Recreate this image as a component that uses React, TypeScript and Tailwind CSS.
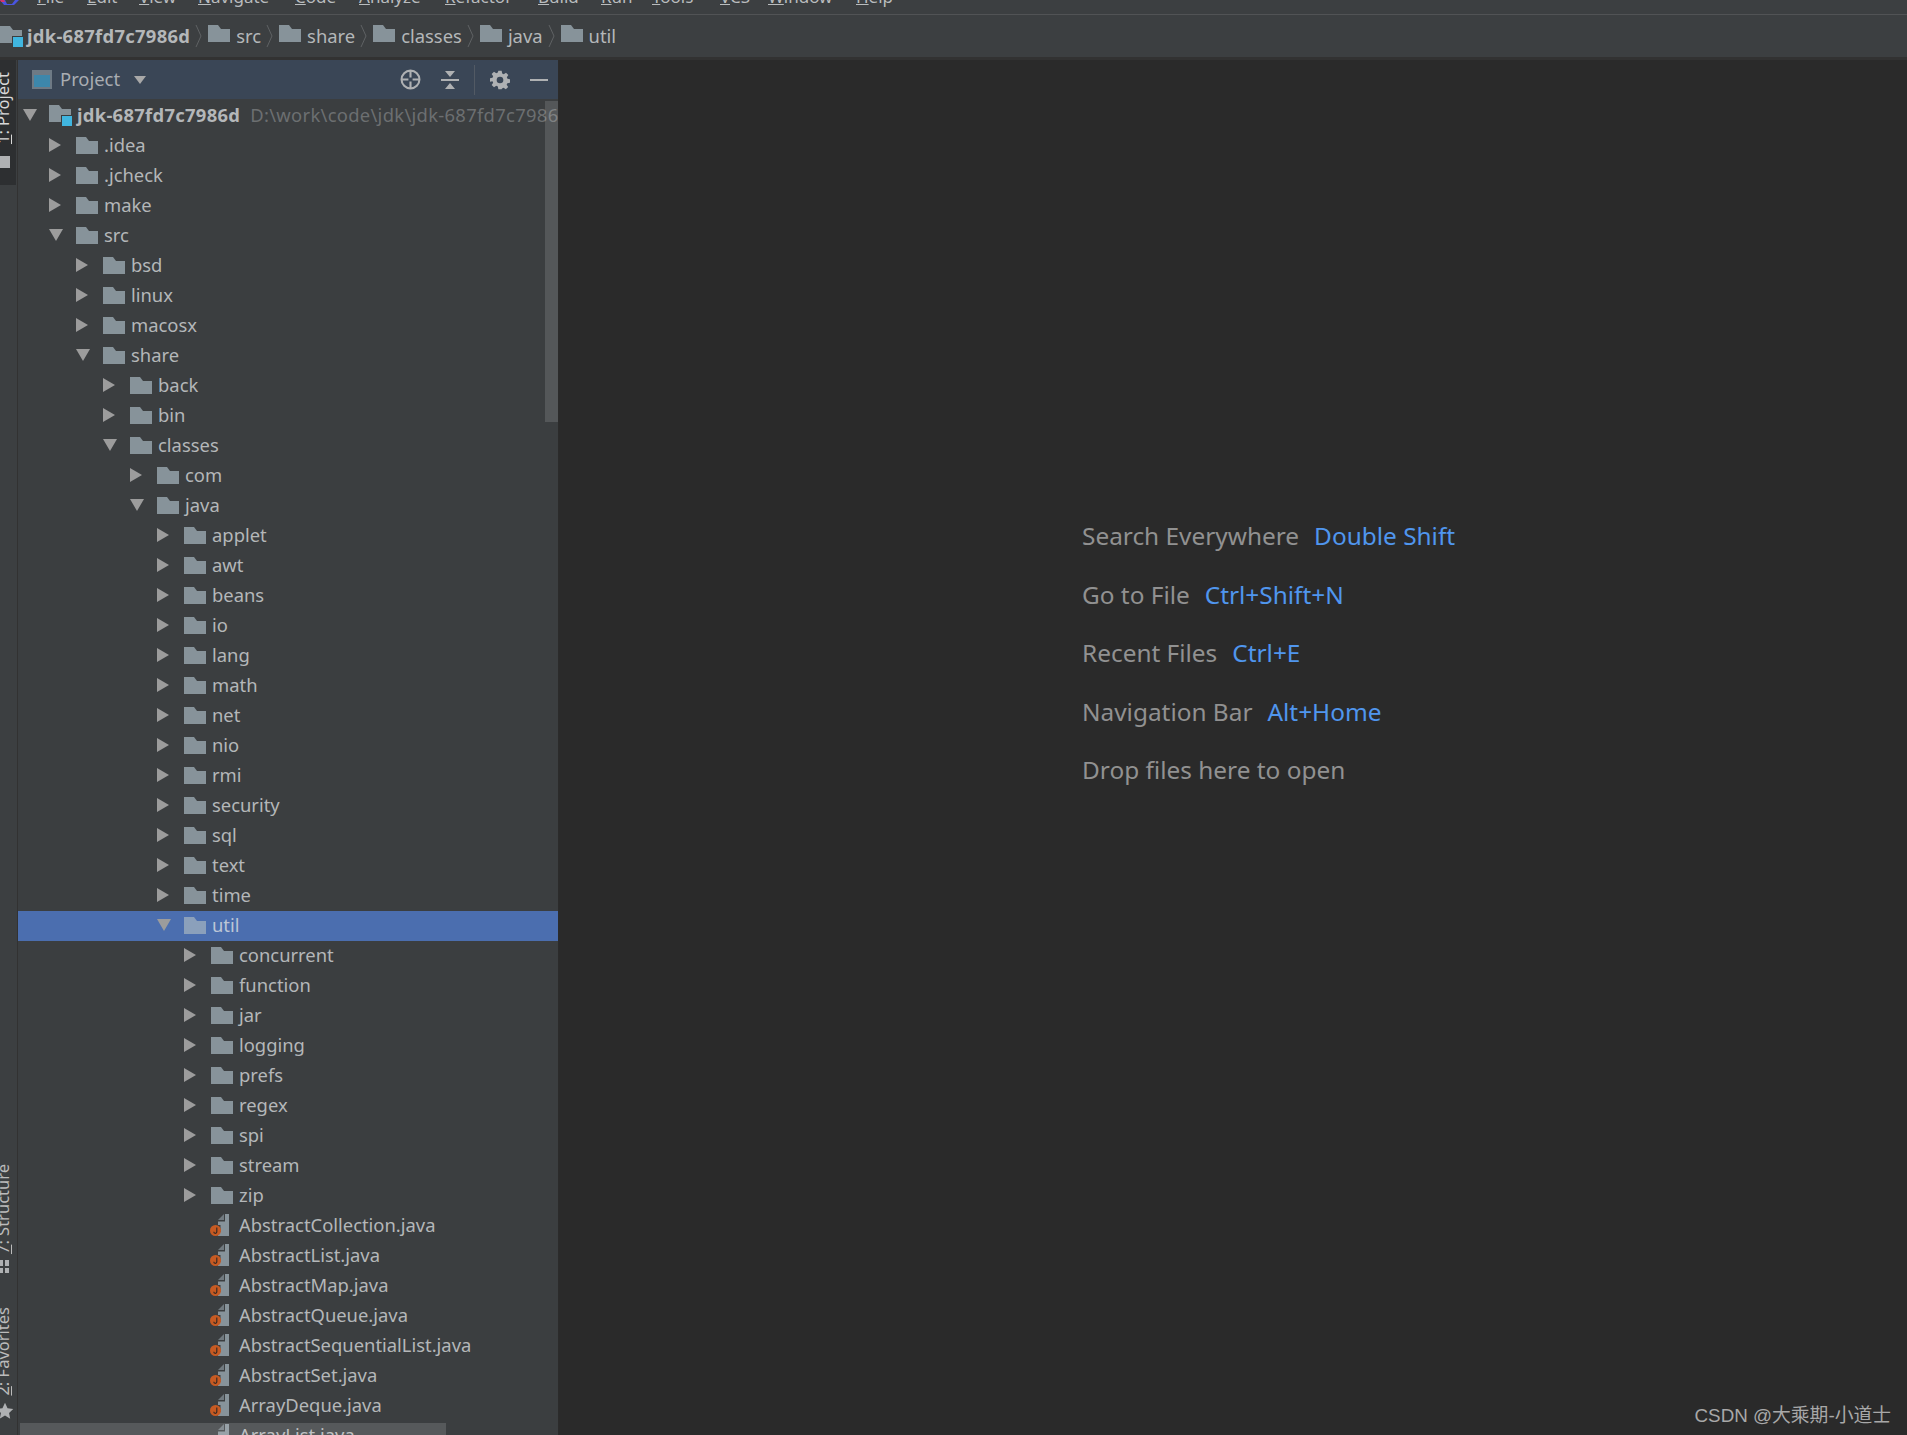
const menuItems = [
  { label: 'File', w: 50 },
  { label: 'Edit', w: 52 },
  { label: 'View', w: 59 },
  { label: 'Navigate', w: 97 },
  { label: 'Code', w: 64 },
  { label: 'Analyze', w: 86 },
  { label: 'Refactor', w: 93 },
  { label: 'Build', w: 63 },
  { label: 'Run', w: 51 },
  { label: 'Tools', w: 68 },
  { label: 'VCS', w: 48 },
  { label: 'Window', w: 88 },
  { label: 'Help', w: 62 },
];

const crumbs = ['src', 'share', 'classes', 'java', 'util'];

type Row = { name: string; depth: number; kind: 'closed' | 'open' | 'file' };

const rows: Row[] = [
  { name: '.idea', depth: 1, kind: 'closed' },
  { name: '.jcheck', depth: 1, kind: 'closed' },
  { name: 'make', depth: 1, kind: 'closed' },
  { name: 'src', depth: 1, kind: 'open' },
  { name: 'bsd', depth: 2, kind: 'closed' },
  { name: 'linux', depth: 2, kind: 'closed' },
  { name: 'macosx', depth: 2, kind: 'closed' },
  { name: 'share', depth: 2, kind: 'open' },
  { name: 'back', depth: 3, kind: 'closed' },
  { name: 'bin', depth: 3, kind: 'closed' },
  { name: 'classes', depth: 3, kind: 'open' },
  { name: 'com', depth: 4, kind: 'closed' },
  { name: 'java', depth: 4, kind: 'open' },
  { name: 'applet', depth: 5, kind: 'closed' },
  { name: 'awt', depth: 5, kind: 'closed' },
  { name: 'beans', depth: 5, kind: 'closed' },
  { name: 'io', depth: 5, kind: 'closed' },
  { name: 'lang', depth: 5, kind: 'closed' },
  { name: 'math', depth: 5, kind: 'closed' },
  { name: 'net', depth: 5, kind: 'closed' },
  { name: 'nio', depth: 5, kind: 'closed' },
  { name: 'rmi', depth: 5, kind: 'closed' },
  { name: 'security', depth: 5, kind: 'closed' },
  { name: 'sql', depth: 5, kind: 'closed' },
  { name: 'text', depth: 5, kind: 'closed' },
  { name: 'time', depth: 5, kind: 'closed' },
  { name: 'util', depth: 5, kind: 'open' },
  { name: 'concurrent', depth: 6, kind: 'closed' },
  { name: 'function', depth: 6, kind: 'closed' },
  { name: 'jar', depth: 6, kind: 'closed' },
  { name: 'logging', depth: 6, kind: 'closed' },
  { name: 'prefs', depth: 6, kind: 'closed' },
  { name: 'regex', depth: 6, kind: 'closed' },
  { name: 'spi', depth: 6, kind: 'closed' },
  { name: 'stream', depth: 6, kind: 'closed' },
  { name: 'zip', depth: 6, kind: 'closed' },
  { name: 'AbstractCollection.java', depth: 6, kind: 'file' },
  { name: 'AbstractList.java', depth: 6, kind: 'file' },
  { name: 'AbstractMap.java', depth: 6, kind: 'file' },
  { name: 'AbstractQueue.java', depth: 6, kind: 'file' },
  { name: 'AbstractSequentialList.java', depth: 6, kind: 'file' },
  { name: 'AbstractSet.java', depth: 6, kind: 'file' },
  { name: 'ArrayDeque.java', depth: 6, kind: 'file' },
  { name: 'ArrayList.java', depth: 6, kind: 'file' },
];

const hints = [
  { text: 'Search Everywhere', key: 'Double Shift' },
  { text: 'Go to File', key: 'Ctrl+Shift+N' },
  { text: 'Recent Files', key: 'Ctrl+E' },
  { text: 'Navigation Bar', key: 'Alt+Home' },
  { text: 'Drop files here to open', key: '' },
];

const Folder = ({ color = '#87939a', className = '' }: { color?: string; className?: string }) => (
  <svg viewBox="0 0 22 17" className={`w-[22px] h-[17px] shrink-0 ${className}`}>
    <path d="M0 0h10l3 4h9v13H0z" fill={color} />
  </svg>
);

const ModuleFolder = () => (
  <svg viewBox="0 0 23 22" className="w-[23px] h-[22px] shrink-0">
    <path d="M0 1h10l3 4h9v13H0z" fill="#87939a" />
    <rect x="12" y="11" width="11" height="11" fill="#3a3d3f" />
    <rect x="13" y="12" width="10" height="10" fill="#40b6e0" />
  </svg>
);

const JavaFile = () => (
  <svg viewBox="0 0 20 22" className="w-[20px] h-[22px] shrink-0 -ml-px">
    <path d="M8 6l6-6v6z" fill="#87939a" opacity="0.7" />
    <path d="M15 0h4v22H8v-4h2.500v-7H8V7.500h7z" fill="#87939a" />
    <circle cx="5.500" cy="16.500" r="5.500" fill="#c75a22" />
    <path d="M6.800 13.500v4.300a1.500 1.500 0 0 1-3 0" fill="none" stroke="#3a2a22" strokeWidth="1.200" />
  </svg>
);

const Arrow = ({ open }: { open: boolean }) =>
  open ? (
    <svg viewBox="0 0 14 12" className="w-[14px] h-[12px]">
      <path d="M0 0h14L7 12z" fill="#9c9c9c" />
    </svg>
  ) : (
    <svg viewBox="0 0 12 14" className="w-[12px] h-[14px]">
      <path d="M0 0l12 7-12 7z" fill="#9c9c9c" />
    </svg>
  );

const TreeRow = ({ row }: { row: Row }) => {
  const selected = row.name === 'util';
  return (
    <div
      className={`flex items-center h-[30px] pb-[2px] whitespace-nowrap ${selected ? 'bg-[#4b6eaf] text-[#bcc6d6]' : 'text-[#b4b7b9]'}`}
      style={{ paddingLeft: row.depth * 27 }}
    >
      <div className="w-[27px] ml-[4px] shrink-0 flex items-center">
        {row.kind !== 'file' && <Arrow open={row.kind === 'open'} />}
      </div>
      <div className="w-[28px] shrink-0 flex items-center">
        {row.kind === 'file' ? <JavaFile /> : <Folder color={selected ? '#8ba0bb' : '#87939a'} />}
      </div>
      <span>{row.name}</span>
    </div>
  );
};

export default function App() {
  return (
    <div className="w-[1907px] h-[1435px] overflow-hidden flex flex-col bg-[#2a2a2a] font-['Noto_Sans','Open_Sans',sans-serif] text-[18.4px] relative">
      {/* menu bar, cut off by the crop at the top */}
      <div className="h-[15px] shrink-0 bg-[#3c3f41] border-b border-[#515355] overflow-hidden flex items-start text-[#b9bcbe]">
        <svg viewBox="0 0 19 5" className="w-[19px] h-[5px] shrink-0 mr-[18px]">
          <path d="M0 0h5l2 4h5l3-4h4l-5 5H4z" fill="#4a55e0" />
          <path d="M0 0h4l1 2H1z" fill="#d6336c" />
        </svg>
        <div className="flex -mt-[13px] leading-[20px] text-[17px]">
          {menuItems.map((m) => (
            <span key={m.label} style={{ width: m.w }}>
              <span className="underline">{m.label[0]}</span>
              {m.label.slice(1)}
            </span>
          ))}
        </div>
      </div>

      {/* breadcrumbs */}
      <div className="h-[42px] shrink-0 bg-[#3c3f41] flex items-center text-[#b4b7b9] whitespace-nowrap">
        <ModuleFolder />
        <span className="ml-[4px] font-bold tracking-[0.3px]">jdk-687fd7c7986d</span>
        {crumbs.map((c) => (
          <div key={c} className="flex items-center">
            <svg viewBox="0 0 8 24" className="w-[8px] h-[24px] ml-[5px] mr-[5px]">
              <path d="M1 1l5 11-5 11" fill="none" stroke="#5f6264" strokeWidth="1" />
            </svg>
            <Folder className="-mt-[4px]" />
            <span className="ml-[6px]">{c}</span>
          </div>
        ))}
      </div>

      <div className="flex-1 flex min-h-0 border-t-[3px] border-[#323232]">
        {/* left tool stripe */}
        <div className="w-[18px] shrink-0 bg-[#3c3f41] border-r border-[#323232] flex flex-col justify-between overflow-hidden text-[#bbbbbb] text-[16.500px]">
          <div className="w-[16px] h-[125px] bg-[#2d2f31] flex flex-col items-end">
            <span className="[writing-mode:vertical-rl] rotate-180 mt-[12px] mr-[5px] leading-none whitespace-nowrap text-[#d8d8d8]">
              <span className="underline">1</span>: Project
            </span>
            <div className="mt-[12px] mr-[6px] w-[10px] h-[12px] bg-[#afb1b3]" />
          </div>
          <div className="flex flex-col items-end pb-[15px]">
            <span className="[writing-mode:vertical-rl] rotate-180 mr-[6px] leading-none whitespace-nowrap">
              <span className="underline">7</span>: Structure
            </span>
            <div className="mt-[6px] mr-[8px] w-[10px] h-[13px] grid grid-cols-2 gap-[2px]">
              <div className="bg-[#afb1b3]" />
              <div className="bg-[#afb1b3]" />
              <div className="bg-[#afb1b3]" />
              <div className="bg-[#afb1b3]" />
            </div>
            <span className="[writing-mode:vertical-rl] rotate-180 mt-[34px] mr-[6px] leading-none whitespace-nowrap">
              <span className="underline">2</span>: Favorites
            </span>
            <svg viewBox="0 0 24 24" className="w-[18px] h-[18px] mt-[6px] mr-[3px]">
              <path d="M12 1l3.400 7.200 7.600 1-5.600 5.300 1.500 7.700L12 18l-6.900 4.200 1.500-7.700L1 9.200l7.600-1z" fill="#afb1b3" />
            </svg>
          </div>
        </div>

        {/* project panel */}
        <div className="w-[541px] shrink-0 bg-[#3b3e40] border-r border-[#2b2b2b] flex flex-col relative overflow-hidden">
          <div className="h-[39px] shrink-0 bg-[#3a4656] flex items-center text-[#a9adb2]">
            <svg viewBox="0 0 20 19" className="w-[20px] h-[19px] ml-[14px]">
              <rect x="0" y="0" width="20" height="19" fill="#6e7a85" />
              <rect x="2" y="5" width="16" height="12" fill="#3d87ab" />
            </svg>
            <span className="ml-[8px] -mt-[2px]">Project</span>
            <svg viewBox="0 0 12 8" className="w-[12px] h-[8px] ml-[14px]">
              <path d="M0 0h12L6 8z" fill="#a8a8a8" />
            </svg>
            <div className="ml-auto flex items-center">
              <svg viewBox="0 0 20 20" className="w-[21px] h-[21px]">
                <circle cx="10" cy="10" r="8.500" fill="none" stroke="#afb1b3" strokeWidth="2" />
                <path d="M10 2v6M10 12v6M2 10h6M12 10h6" stroke="#afb1b3" strokeWidth="2" />
              </svg>
              <svg viewBox="0 0 18 20" className="w-[18px] h-[20px] ml-[20px]">
                <path d="M0 10h18" stroke="#afb1b3" strokeWidth="2" />
                <path d="M4 1h10L9 7zM4 19h10L9 13z" fill="#afb1b3" />
              </svg>
              <div className="w-px h-[30px] bg-[#525a64] ml-[15px]" />
              <svg viewBox="0 0 24 24" className="w-[20px] h-[20px] ml-[15px]">
                <path
                  fillRule="evenodd"
                  d="M10 1h4l.6 3.200 1.900.8 2.700-1.800 2.800 2.800-1.800 2.700.8 1.900 3 .6v4l-3.200.6-.8 1.900 1.800 2.700-2.800 2.800-2.700-1.800-1.900.8L14 23h-4l-.6-3.200-1.900-.8-2.700 1.800-2.800-2.800 1.800-2.700-.8-1.900L0 14v-4l3-.6.800-1.900L2 4.800 4.800 2l2.700 1.800 1.900-.8zM12 8a4 4 0 1 0 0 8 4 4 0 0 0 0-8z"
                  fill="#afb1b3"
                />
              </svg>
              <div className="w-[18px] h-[2px] bg-[#afb1b3] ml-[20px] mr-[10px]" />
            </div>
          </div>

          <div className="flex-1 overflow-hidden pt-[2px]">
            <div className="flex items-center h-[30px] pb-[2px] whitespace-nowrap text-[#b4b7b9] pl-[5px]">
              <div className="w-[26px] shrink-0">
                <Arrow open />
              </div>
              <div className="w-[28px] shrink-0">
                <ModuleFolder />
              </div>
              <span className="font-bold tracking-[0.3px]">jdk-687fd7c7986d</span>
              <span className="ml-[10px] text-[#6c6f71] tracking-[0.3px]">D:\work\code\jdk\jdk-687fd7c7986d</span>
            </div>
            {rows.map((r) => (
              <TreeRow key={r.name} row={r} />
            ))}
          </div>

          {/* scrollbars lie over the tree */}
          <div className="absolute right-0 top-[41px] w-[13px] h-[321px] bg-white/[.13]" />
          <div className="absolute left-[2px] bottom-0 w-[426px] h-[12px] bg-white/[.14]" />
        </div>

        {/* empty editor */}
        <div className="flex-1 bg-[#2a2a2a] flex flex-col pl-[523px] pt-[461px] gap-[28.500px] text-[24.400px] leading-[30px] text-[#919191]">
          {hints.map((h) => (
            <div key={h.text} className="flex whitespace-nowrap">
              <span>{h.text}</span>
              {h.key && <span className="ml-[15px] text-[#5096ee]">{h.key}</span>}
            </div>
          ))}
        </div>
      </div>

      <div className="absolute right-[16px] bottom-[5px] text-[#a8a8a8] text-[18.800px] font-['Liberation_Sans','Noto_Sans_CJK_SC',sans-serif]">
        CSDN @大乘期-小道士
      </div>
    </div>
  );
}
